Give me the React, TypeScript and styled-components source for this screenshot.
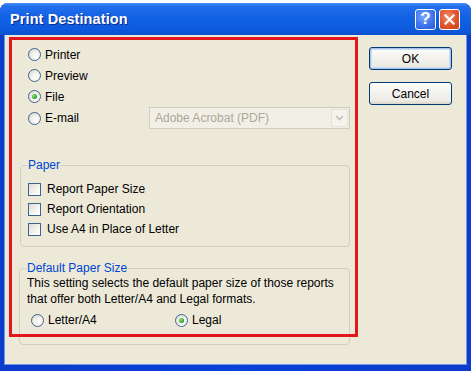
import React from "react";
import styled, { createGlobalStyle } from "styled-components";

const GlobalStyle = createGlobalStyle`
  html, body {
    margin: 0;
    padding: 0;
    background: #fff;
  }
  body {
    font-family: "Liberation Sans", Arial, sans-serif;
    font-size: 12px;
    color: #000;
    width: 474px;
    height: 372px;
    overflow: hidden;
  }
`;

const Page = styled.div`
  width: 474px;
  height: 372px;
  background: #fff;
`;

// bottom of the text line above the dialog, cut off by the window
const Peek = styled.div`
  height: 3px;
  overflow: hidden;
  padding-left: 3px;
  span {
    display: block;
    margin-top: -10px;
    line-height: 12px;
    font-size: 12px;
  }
`;

const Window = styled.div`
  width: 471px;
  height: 368px;
  display: flex;
  flex-direction: column;
  border-radius: 8px 8px 0 0;
  overflow: hidden;
  background: #0a3fd0;
`;

const TitleBar = styled.div`
  height: 32px;
  flex: none;
  display: flex;
  align-items: center;
  gap: 3px;
  padding: 0 11px 0 10px;
  background: linear-gradient(
    #4a90f7 0%,
    #2270ec 10%,
    #1260e3 45%,
    #0d5adf 80%,
    #0c50cc 100%
  );
`;

const Title = styled.div`
  flex: 1;
  color: #fff;
  font-weight: bold;
  font-size: 14.5px;
  letter-spacing: 0.1px;
  text-shadow: 1px 1px 0 #0b2a8a;
`;

const CaptionButton = styled.div<{ $close?: boolean }>`
  width: 21px;
  height: 21px;
  box-sizing: border-box;
  border: 1px solid #fff;
  border-radius: 3px;
  display: flex;
  align-items: center;
  justify-content: center;
  color: #fff;
  font-weight: bold;
  font-size: 17px;
  background: ${(p) =>
    p.$close
      ? "radial-gradient(circle at 40% 35%, #f08a65 0%, #e0542c 55%, #c8401c 100%)"
      : "radial-gradient(circle at 40% 35%, #7aa8fb 0%, #3f74ec 55%, #2558d8 100%)"};
`;

const Frame = styled.div`
  flex: 1;
  display: flex;
  padding: 0 5px 6px 4px;
  background: linear-gradient(90deg, #0b3ccb, #0842d8 50%, #0b3ccb);
`;

const Body = styled.div`
  flex: 1;
  position: relative;
  display: flex;
  gap: 19px;
  padding: 9px 15px 0 15px;
  background: #ece9d8;
  box-shadow: inset 1px 0 0 #6d97ea, inset -1px -1px 0 #6d97ea;
`;

const LeftColumn = styled.div`
  width: 331px;
  flex: none;
  display: flex;
  flex-direction: column;
`;

const RightColumn = styled.div`
  display: flex;
  flex-direction: column;
  gap: 12px;
  margin-top: 3px;
`;

const OptionRow = styled.div<{ $h?: number; $pad?: number }>`
  height: ${(p) => p.$h ?? 21}px;
  display: flex;
  align-items: center;
  padding-left: ${(p) => p.$pad ?? 9}px;
`;

const Option = styled.label<{ $width?: number; $gap?: number }>`
  display: flex;
  align-items: center;
  gap: ${(p) => p.$gap ?? 4}px;
  ${(p) => (p.$width ? `width: ${p.$width}px;` : "")}
`;

const RadioDot = styled.span<{ $on?: boolean }>`
  width: 13px;
  height: 13px;
  box-sizing: border-box;
  flex: none;
  border-radius: 50%;
  border: 1px solid #3d6491;
  background: radial-gradient(circle at 65% 70%, #ffffff 0%, #f4f3ee 40%, #d6d4cb 100%);
  display: flex;
  align-items: center;
  justify-content: center;
  &::after {
    content: "";
    display: ${(p) => (p.$on ? "block" : "none")};
    width: 5px;
    height: 5px;
    border-radius: 50%;
    background: radial-gradient(circle at 35% 35%, #8fe07a, #21a121 70%);
  }
`;

const CheckBox = styled.span`
  width: 13px;
  height: 13px;
  box-sizing: border-box;
  flex: none;
  border: 1px solid #3d6491;
  background: linear-gradient(135deg, #dcdad2 0%, #f6f6f2 60%, #ffffff 100%);
`;

const Select = styled.div`
  margin-left: auto;
  width: 201px;
  height: 22px;
  box-sizing: border-box;
  border: 1px solid #cfcdbf;
  background: #f2f0e6;
  display: flex;
  align-items: center;
  padding: 0 1px 0 5px;
  color: #aca899;
`;

const SelectText = styled.span`
  flex: 1;
`;

const SelectArrow = styled.span`
  width: 17px;
  height: 18px;
  box-sizing: border-box;
  border: 1px solid #e4e2d6;
  border-radius: 2px;
  background: #f4f3ee;
  display: flex;
  align-items: center;
  justify-content: center;
`;

const Group = styled.fieldset<{ $top: number; $bottom: number; $left?: number }>`
  margin: ${(p) => p.$top}px 0 0 ${(p) => p.$left ?? 1}px;
  padding: 0 6px ${(p) => p.$bottom}px 6px;
  border: 1px solid #d0d0bf;
  border-radius: 4px;
  min-width: 0;
`;

const Legend = styled.legend`
  padding: 0 1px;
  color: #0046d5;
  font-size: 12px;
  line-height: 14px;
`;

const Note = styled.p`
  margin: 0;
  padding-left: 1px;
  line-height: 16px;
`;

const Button = styled.div<{ $default?: boolean }>`
  width: 83px;
  height: 23px;
  box-sizing: border-box;
  border: 1px solid #003c74;
  border-radius: 3px;
  display: flex;
  align-items: center;
  justify-content: center;
  background: linear-gradient(#ffffff 0%, #f4f3ee 40%, #ecebe4 85%, #d8d3c6 100%);
  box-shadow: ${(p) =>
    p.$default ? "inset 0 0 0 1px #a8c2ee, inset 0 0 0 2px #cfdcf5" : "none"};
`;

// red annotation drawn over the dialog
const Highlight = styled.div`
  position: absolute;
  left: 5px;
  top: 2px;
  width: 349px;
  height: 300px;
  box-sizing: border-box;
  border: 3px solid #e2161d;
  pointer-events: none;
`;

const Radio = ({ label, on, width }: { label: string; on?: boolean; width?: number }) => (
  <Option $width={width}>
    <RadioDot $on={on} />
    {label}
  </Option>
);

const Check = ({ label }: { label: string }) => (
  <OptionRow $h={20} $pad={1}>
    <Option $gap={6}>
      <CheckBox />
      {label}
    </Option>
  </OptionRow>
);

export default function App() {
  return (
    <Page>
      <GlobalStyle />
      <Peek>
        <span>Print</span>
      </Peek>
      <Window>
        <TitleBar>
          <Title>Print Destination</Title>
          <CaptionButton>?</CaptionButton>
          <CaptionButton $close>
            <svg width="11" height="11" viewBox="0 0 11 11">
              <path d="M1.5 1.5 L9.5 9.5 M9.5 1.5 L1.5 9.5" stroke="#fff" strokeWidth="2.2" strokeLinecap="square" />
            </svg>
          </CaptionButton>
        </TitleBar>
        <Frame>
          <Body>
            <LeftColumn>
              <OptionRow>
                <Radio label="Printer" />
              </OptionRow>
              <OptionRow>
                <Radio label="Preview" />
              </OptionRow>
              <OptionRow>
                <Radio label="File" on />
              </OptionRow>
              <OptionRow $h={22}>
                <Radio label="E-mail" />
                <Select>
                  <SelectText>Adobe Acrobat (PDF)</SelectText>
                  <SelectArrow>
                    <svg width="9" height="6" viewBox="0 0 9 6">
                      <path d="M1 1 L4.5 4.5 L8 1" fill="none" stroke="#c2c0b2" strokeWidth="1.6" />
                    </svg>
                  </SelectArrow>
                </Select>
              </OptionRow>

              <Group $top={29} $bottom={7}>
                <Legend>Paper</Legend>
                <div style={{ height: 7 }} />
                <Check label="Report Paper Size" />
                <Check label="Report Orientation" />
                <Check label="Use A4 in Place of Letter" />
              </Group>

              <Group $top={14} $bottom={14} $left={0}>
                <Legend>Default Paper Size</Legend>
                <Note>
                  This setting selects the default paper size of those reports
                  <br />
                  that offer both Letter/A4 and Legal formats.
                </Note>
                <OptionRow $h={20} $pad={5} style={{ marginTop: 3 }}>
                  <Radio label="Letter/A4" width={144} />
                  <Radio label="Legal" on />
                </OptionRow>
              </Group>
            </LeftColumn>
            <RightColumn>
              <Button $default>OK</Button>
              <Button>Cancel</Button>
            </RightColumn>
            <Highlight />
          </Body>
        </Frame>
      </Window>
    </Page>
  );
}
